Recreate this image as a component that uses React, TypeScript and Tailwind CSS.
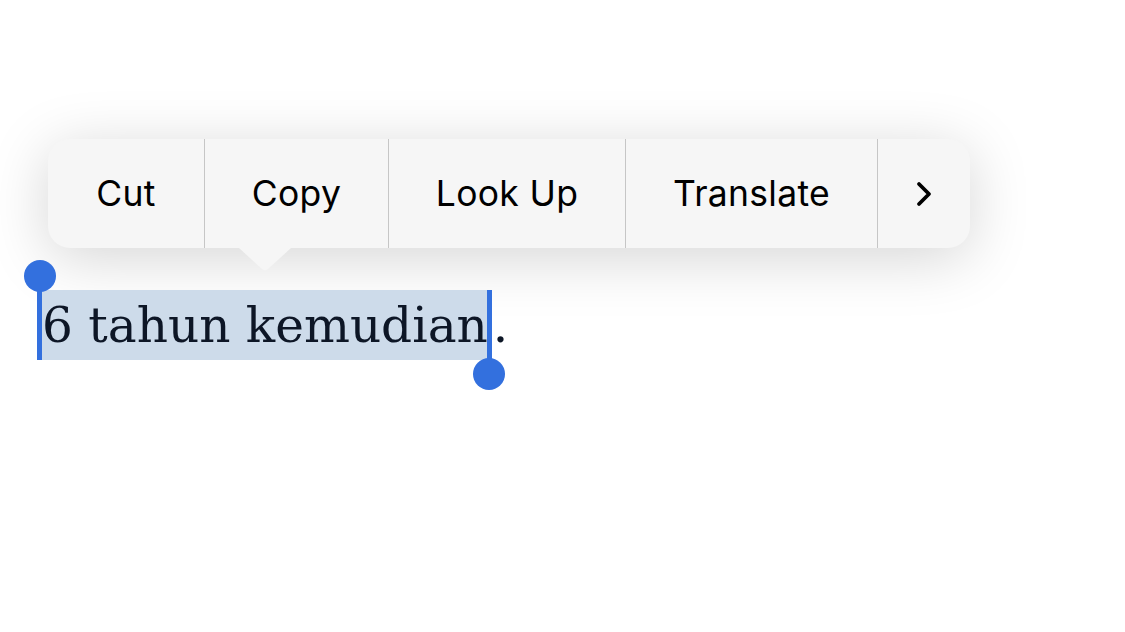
import React from "react";

const items = [
  { label: "Cut", w: "w-[156px]" },
  { label: "Copy", w: "w-[184px]" },
  { label: "Look Up", w: "w-[237px]" },
  { label: "Translate", w: "w-[252px]" },
];

export default function App() {
  return (
    <div className="w-[1125px] h-[632px] bg-white overflow-hidden pt-[139px] pl-[48px]">
      <div className="relative w-[922px] h-[109px] rounded-[22px] bg-[#f6f6f6] shadow-[0_10px_60px_rgba(0,0,0,0.17)] flex" style={{ fontFamily: "Inter, 'Noto Sans', sans-serif" }}>
        {items.map((it, i) => (
          <div
            key={it.label}
            className={`${it.w} h-full flex items-center justify-center text-[35.5px] tracking-[0.3px] text-black ${i > 0 ? "border-l border-[#c6c6c6]" : ""}`}
          >
            {it.label}
          </div>
        ))}
        <div className="flex-1 h-full flex items-center justify-center border-l border-[#c6c6c6]">
          <svg width="20" height="28" viewBox="0 0 20 28">
            <path d="M5 4 L15 14 L5 24" fill="none" stroke="#000" strokeWidth="3.8" strokeLinecap="round" strokeLinejoin="round" />
          </svg>
        </div>
        <svg className="absolute left-[191px] top-[109px]" width="52" height="23" viewBox="0 0 52 23">
          <path d="M0 0 L52 0 L29 21 Q26 23.5 23 21 Z" fill="#f6f6f6" />
        </svg>
      </div>
      <div className="mt-[42px] -ml-[8px] w-fit">
        <div className="flex items-center h-[70px]" style={{ fontFamily: "'DejaVu Serif', serif" }}>
          <span className="relative bg-[#cddbea] text-[#0d1626] text-[48.5px] leading-[70px] pl-[2px]">
            6 tahun kemudian
            <span className="absolute left-[-3px] top-0 w-[5px] h-[70px] bg-[#3370de]" />
            <span className="absolute left-[-16px] top-[-30px] w-[32px] h-[32px] rounded-full bg-[#3370de]" />
            <span className="absolute right-[-4px] top-0 w-[5px] h-[70px] bg-[#3370de]" />
            <span className="absolute right-[-17px] top-[68px] w-[32px] h-[32px] rounded-full bg-[#3370de]" />
          </span>
          <span className="text-[#0d1626] text-[48.5px] leading-[70px] ml-[5px]">.</span>
        </div>
      </div>
    </div>
  );
}
